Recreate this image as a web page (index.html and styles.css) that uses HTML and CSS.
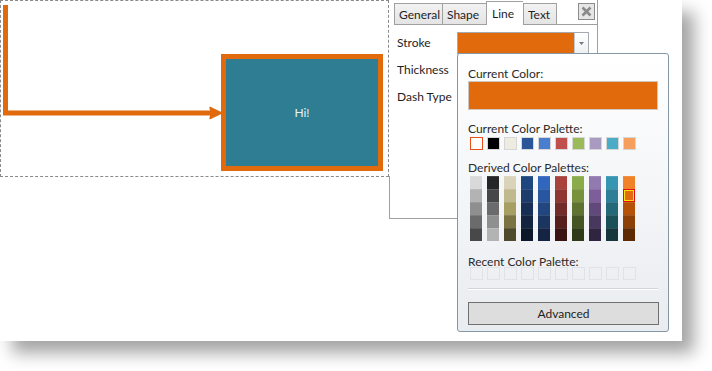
FILE: index.html
```html
<!DOCTYPE html>
<html>
<head>
<meta charset="utf-8">
<link rel="stylesheet" href="styles.css">
</head>
<body>
<div class="shot">
  <div class="canvas">
    <svg class="diagram" width="387" height="175" viewBox="1 1 387 175">
      <path d="M5.5 5 V113 H213" fill="none" stroke="#e06a0c" stroke-width="5"/>
      <path d="M210 107.5 L221.5 113 L210 118.5 Q212 113 210 107.5 Z" fill="#e06a0c" stroke="#e06a0c" stroke-width="1.5" stroke-linejoin="round"/>
      <rect x="223.5" y="56.5" width="157" height="112" fill="#2e7d92" stroke="#e06a0c" stroke-width="5"/>
      <text x="302" y="117" text-anchor="middle" class="hi">Hi!</text>
    </svg>
  </div>
  <div class="panel">
    <div class="tabbar">
      <div class="tab">General</div>
      <div class="tab">Shape</div>
      <div class="tab active">Line</div>
      <div class="tab">Text</div>
      <div class="tabfill"><div class="close"><svg width="11" height="11" viewBox="0 0 11 11"><path d="M1.5 1.5 L9.5 9.5 M9.5 1.5 L1.5 9.5" stroke="#8a8a8a" stroke-width="2.6"/></svg></div></div>
    </div>
    <div class="props">
      <div class="prow"><span class="plabel">Stroke</span>
        <div class="combo"><div class="combo-fill"></div><div class="combo-btn"><svg width="5" height="3" viewBox="0 0 5 3"><path d="M0 0 H5 L2.5 3 Z" fill="#707880"/></svg></div></div>
      </div>
      <div class="prow"><span class="plabel">Thickness</span></div>
      <div class="prow"><span class="plabel">Dash Type</span></div>
    </div>
    <div class="popup">
      <div class="lbl">Current Color:</div>
      <div class="curbar"></div>
      <div class="lbl l2">Current Color Palette:</div>
      <div class="swrow">
        <span class="sw sel" style="background:#ffffff"></span>
        <span class="sw" style="background:#000000"></span>
        <span class="sw" style="background:#eeece1"></span>
        <span class="sw" style="background:#2a5699"></span>
        <span class="sw" style="background:#4a7fcf"></span>
        <span class="sw" style="background:#c0504d"></span>
        <span class="sw" style="background:#9bbb59"></span>
        <span class="sw" style="background:#a99ac1"></span>
        <span class="sw" style="background:#4aacc6"></span>
        <span class="sw" style="background:#f69f5d"></span>
      </div>
      <div class="lbl l3">Derived Color Palettes:</div>
      <div class="derived">
        <div class="col"><i style="background:#d9d9d9"></i><i style="background:#b3b3b3"></i><i style="background:#8f8f8f"></i><i style="background:#6b6b6b"></i><i style="background:#484848"></i></div>
        <div class="col"><i style="background:#262626"></i><i style="background:#474747"></i><i style="background:#6b6b6b"></i><i style="background:#8f8f8f"></i><i style="background:#b3b3b3"></i></div>
        <div class="col"><i style="background:#d8d3b9"></i><i style="background:#c1b98e"></i><i style="background:#a69e62"></i><i style="background:#7b7442"></i><i style="background:#4e4a2b"></i></div>
        <div class="col"><i style="background:#1f477f"></i><i style="background:#1c3c6e"></i><i style="background:#172f56"></i><i style="background:#12243f"></i><i style="background:#0c1829"></i></div>
        <div class="col"><i style="background:#3166bf"></i><i style="background:#2856a0"></i><i style="background:#224680"></i><i style="background:#1b3561"></i><i style="background:#142442"></i></div>
        <div class="col"><i style="background:#a9423d"></i><i style="background:#8f3632"></i><i style="background:#722b28"></i><i style="background:#561f1d"></i><i style="background:#3a1413"></i></div>
        <div class="col"><i style="background:#8aab49"></i><i style="background:#77913d"></i><i style="background:#5f7331"></i><i style="background:#465524"></i><i style="background:#2e3a18"></i></div>
        <div class="col"><i style="background:#917ab0"></i><i style="background:#7d5e98"></i><i style="background:#614a7b"></i><i style="background:#48385d"></i><i style="background:#302540"></i></div>
        <div class="col"><i style="background:#3595b2"></i><i style="background:#2c7f96"></i><i style="background:#256979"></i><i style="background:#1c5059"></i><i style="background:#14363c"></i></div>
        <div class="col"><i style="background:#f0822a"></i><i class="dsel" style="background:#e06a0c"></i><i style="background:#b55208"></i><i style="background:#8c3f06"></i><i style="background:#5e2a04"></i></div>
      </div>
      <div class="lbl l4">Recent Color Palette:</div>
      <div class="swrow recent">
        <span class="sw"></span><span class="sw"></span><span class="sw"></span><span class="sw"></span><span class="sw"></span>
        <span class="sw"></span><span class="sw"></span><span class="sw"></span><span class="sw"></span><span class="sw"></span>
      </div>
      <div class="sep"></div>
      <div class="adv">Advanced</div>
    </div>
  </div>
</div>
</body>
</html>
```
FILE: styles.css
```css
html, body {
  margin: 0;
  padding: 0;
  background: #ffffff;
}
html {
  height: 100%;
}
body {
  min-height: 371px;
  font-family: "Lato", "Open Sans", sans-serif;
  font-size: 12px;
  color: #1e1e1e;
}
.shot {
  width: 682px;
  height: 341px;
  background: #ffffff;
  box-shadow: 12px 12px 16px rgba(0, 0, 0, 0.36);
  display: flex;
  align-items: flex-start;
}
.canvas {
  width: 389px;
  height: 177px;
  box-sizing: border-box;
  border: 1px dashed #8a8a8a;
  position: relative;
  flex: none;
}
.diagram {
  display: block;
  overflow: visible;
}
.hi {
  font-family: "Lato", sans-serif;
  font-size: 12px;
  fill: #e6f2f4;
}
.panel {
  position: relative;
  width: 209px;
  height: 219px;
  box-sizing: border-box;
  border-right: 1px solid #a0a0a0;
  border-bottom: 1px solid #a0a0a0;
  background: #ffffff linear-gradient(#a0a0a0, #a0a0a0) left bottom / 1px 42px no-repeat;
  flex: none;
}
.tabbar {
  display: flex;
  align-items: flex-end;
  height: 25px;
  padding-left: 5px;
}
.tab {
  height: 22px;
  box-sizing: border-box;
  border: 1px solid #a0a0a0;
  border-right: none;
  background: linear-gradient(#f2f2f2, #e4e4e4);
  padding: 0 4px;
  display: flex;
  align-items: center;
  font-size: 12px;
  color: #1e1e1e;
}
.tab:nth-child(1) { width: 48px; }
.tab:nth-child(2) { width: 44px; }
.tab:nth-child(3) { width: 37px; }
.tab:nth-child(4) { width: 34px; border-right: 1px solid #a0a0a0; }
.tab.active {
  height: 24px;
  background: #ffffff;
  border-bottom: none;
  padding-left: 5px;
}
.tabfill {
  flex: 1;
  align-self: stretch;
  border-bottom: 1px solid #a0a0a0;
  position: relative;
}
.close {
  position: absolute;
  right: 2px;
  top: 3px;
  width: 17px;
  height: 17px;
  box-sizing: border-box;
  border: 1px solid #8c8c8c;
  background: #e6e6e6;
  display: flex;
  align-items: center;
  justify-content: center;
}
.close svg { display: block; }
.props {
  padding: 4px 0 0 8px;
}
.prow {
  height: 27px;
  display: flex;
  align-items: center;
}
.plabel {
  width: 60px;
  color: #1e1e1e;
}
.combo {
  align-self: flex-start;
  margin-top: 3px;
  width: 132px;
  height: 22px;
  box-sizing: border-box;
  border: 1px solid #a6aab0;
  display: flex;
}
.combo-fill {
  flex: 1;
  background: #e06a0c;
}
.combo-btn {
  width: 13px;
  background: linear-gradient(#ffffff, #eef0f2);
  border-left: 1px solid #c4c8cc;
  display: flex;
  align-items: center;
  justify-content: center;
}
.combo-btn svg { display: block; }
.popup {
  position: absolute;
  left: 68px;
  top: 53px;
  width: 212px;
  height: 279px;
  box-sizing: border-box;
  border: 1px solid #8596a6;
  border-radius: 3px;
  background: linear-gradient(#ffffff, #e9ecf0);
  padding: 12px 0 0 10px;
  display: flex;
  flex-direction: column;
  align-items: flex-start;
}
.lbl {
  line-height: 15px;
  color: #2a2a2a;
  font-size: 12px;
}
.curbar {
  margin-top: 0;
  width: 190px;
  height: 29px;
  box-sizing: border-box;
  border: 1px solid #d0c6be;
  background: #e06a0c;
}
.l2 { margin-top: 11px; }
.swrow {
  display: flex;
  gap: 4px;
  margin-top: 1px;
  margin-left: 2px;
}
.sw {
  width: 13px;
  height: 13px;
  box-sizing: border-box;
  border: 1px solid #d6d6d6;
}
.sw.sel {
  border: 1px solid #e8501a;
  box-shadow: inset 0 0 0 1px #ffffff;
}
.l3 { margin-top: 10px; }
.derived {
  display: flex;
  gap: 5px;
  margin-top: 1px;
  margin-left: 2px;
}
.col {
  display: flex;
  flex-direction: column;
}
.col i {
  display: block;
  width: 12px;
  height: 13px;
  box-sizing: border-box;
  box-shadow: inset 0 1px 0 rgba(255, 255, 255, 0.12);
}
.col i.dsel {
  border: 1px solid #e01010;
  box-shadow: inset 0 0 0 1px #ffe000;
}
.l4 { margin-top: 13px; }
.swrow.recent {
  margin-top: -2px;
}
.recent .sw {
  border-color: #dfe2e6;
}
.sep {
  margin-top: 8px;
  width: 190px;
  height: 1px;
  background: #d2d6da;
  border-bottom: 1px solid #ffffff;
}
.adv {
  margin-top: 12px;
  width: 191px;
  height: 23px;
  box-sizing: border-box;
  border: 1px solid #707070;
  background: #dddddd;
  display: flex;
  align-items: center;
  justify-content: center;
  color: #1e1e1e;
}
```
